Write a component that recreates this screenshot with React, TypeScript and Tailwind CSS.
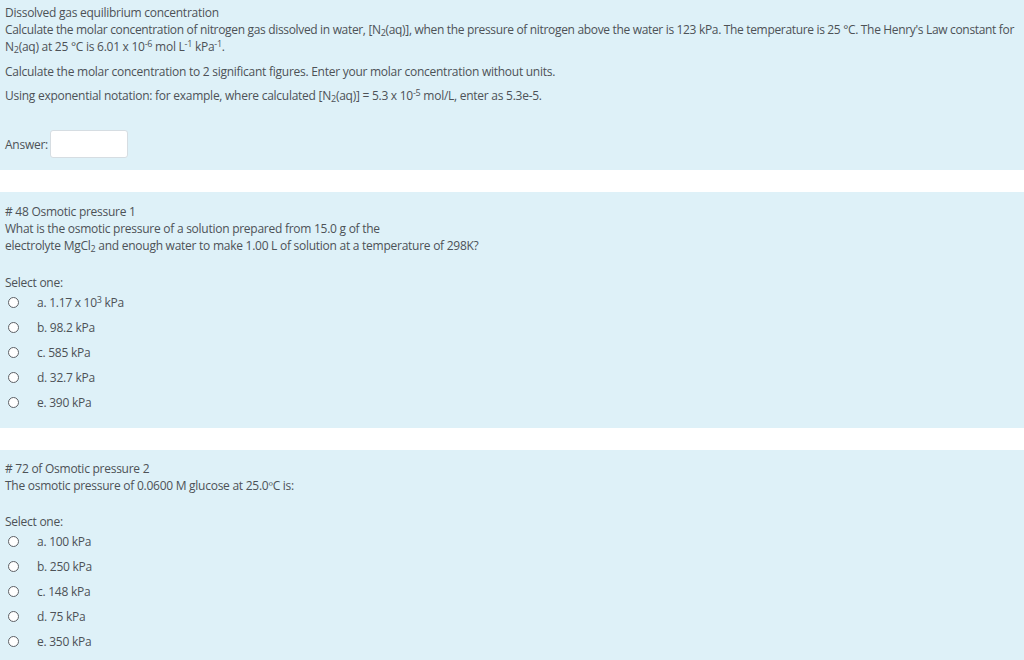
const font = { fontFamily: '"Open Sans", "Noto Sans", sans-serif' };

function Radio({ label }: { label: React.ReactNode }) {
  return (
    <div className="flex h-[25px] items-center">
      <span className="ml-[8px] mr-[18px] h-[11px] w-[11px] rounded-full border-[1.5px] border-[#5d6166] bg-white" />
      <span>{label}</span>
    </div>
  );
}

export default function App() {
  return (
    <div
      className="min-h-[660px] w-[1024px] overflow-hidden bg-white text-[12px] leading-[17px] tracking-[-0.26px] text-[#4d5257]"
      style={font}
    >
      {/* question 1 */}
      <div className="bg-[#def1f8] pb-[12px] pl-[5px] pr-0 pt-[4px]">
        <div>Dissolved gas equilibrium concentration</div>
        <div className="whitespace-nowrap tracking-[-0.33px]">
          Calculate the molar concentration of nitrogen gas dissolved in water, [N<sub className="text-[9px]">2</sub>(aq)], when the
          pressure of nitrogen above the water is 123 kPa. The temperature is 25 °C. The Henry's Law constant for
        </div>
        <div>
          N<sub className="text-[9px]">2</sub>(aq) at 25 °C is 6.01 x 10<sup className="text-[9px]">-6</sup> mol L
          <sup className="text-[9px]">-1</sup> kPa<sup className="text-[9px]">-1</sup>.
        </div>
        <div className="mt-[8px]">
          Calculate the molar concentration to 2 significant figures. Enter your molar concentration without units.
        </div>
        <div className="mt-[7px]">
          Using exponential notation: for example, where calculated [N<sub className="text-[9px]">2</sub>(aq)] = 5.3 x 10
          <sup className="text-[9px]">-5</sup> mol/L, enter as 5.3e-5.
        </div>
        <div className="mt-[26px] flex items-center">
          <span>Answer:</span>
          <div className="ml-[2px] h-[28px] w-[78px] rounded-[3px] border border-[#d6dde2] bg-white" />
        </div>
      </div>

      <div className="h-[22px]" />

      {/* question 2 */}
      <div className="bg-[#def1f8] px-[5px] pb-[13px] pt-[11px]">
        <div># 48 Osmotic pressure 1</div>
        <div>What is the osmotic pressure of a solution prepared from 15.0 g of the</div>
        <div>
          electrolyte MgCl<sub className="text-[9px]">2</sub> and enough water to make 1.00 L of solution at a temperature of 298K?
        </div>
        <div className="mt-[20px]">Select one:</div>
        <div className="-ml-[5px] -mt-[1px]">
          <Radio label={<>a. 1.17 x 10<sup className="text-[9px]">3</sup> kPa</>} />
          <Radio label="b. 98.2 kPa" />
          <Radio label="c. 585 kPa" />
          <Radio label="d. 32.7 kPa" />
          <Radio label="e. 390 kPa" />
        </div>
      </div>

      <div className="h-[22px]" />

      {/* question 3 */}
      <div className="bg-[#def1f8] px-[5px] pb-[12px] pt-[10px]">
        <div># 72 of Osmotic pressure 2</div>
        <div>The osmotic pressure of 0.0600 M glucose at 25.0ºC is:</div>
        <div className="mt-[19px]">Select one:</div>
        <div className="-ml-[5px] -mt-[1px]">
          <Radio label="a. 100 kPa" />
          <Radio label="b. 250 kPa" />
          <Radio label="c. 148 kPa" />
          <Radio label="d. 75 kPa" />
          <Radio label="e. 350 kPa" />
        </div>
      </div>
    </div>
  );
}
